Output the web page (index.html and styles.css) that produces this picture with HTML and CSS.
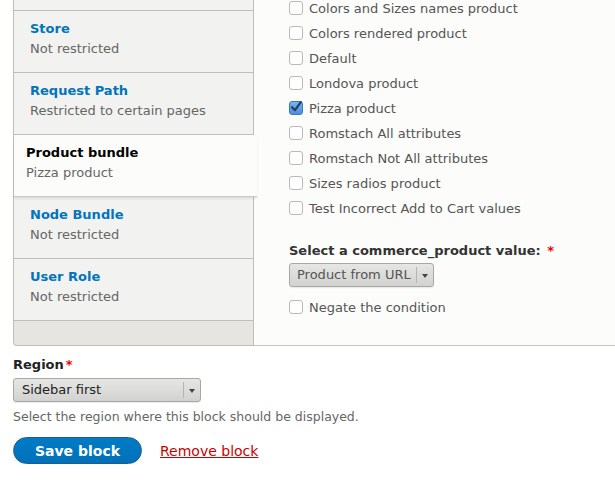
FILE: index.html
```html
<!DOCTYPE html>
<html>
<head>
<meta charset="utf-8">
<link rel="stylesheet" href="styles.css">
</head>
<body>
<div class="page">
  <div class="vtabs">
    <ul class="menu">
      <li class="item stub"></li>
      <li class="item"><a href="#"><strong>Store</strong><span class="summary">Not restricted</span></a></li>
      <li class="item"><a href="#"><strong>Request Path</strong><span class="summary">Restricted to certain pages</span></a></li>
      <li class="item selected"><a href="#"><strong>Product bundle</strong><span class="summary">Pizza product</span></a></li>
      <li class="item"><a href="#"><strong>Node Bundle</strong><span class="summary">Not restricted</span></a></li>
      <li class="item"><a href="#"><strong>User Role</strong><span class="summary">Not restricted</span></a></li>
    </ul>
    <div class="pane">
      <div class="checks">
        <label class="check"><span class="cb"></span>Colors and Sizes names product</label>
        <label class="check"><span class="cb"></span>Colors rendered product</label>
        <label class="check"><span class="cb"></span>Default</label>
        <label class="check"><span class="cb"></span>Londova product</label>
        <label class="check"><span class="cb checked"><svg viewBox="0 0 14 14" width="14" height="14"><path d="M3 7.2 L6 10.2 L11.8 2.2" fill="none" stroke="#1f3f66" stroke-width="2.2" stroke-linecap="round" stroke-linejoin="round"/></svg></span>Pizza product</label>
        <label class="check"><span class="cb"></span>Romstach All attributes</label>
        <label class="check"><span class="cb"></span>Romstach Not All attributes</label>
        <label class="check"><span class="cb"></span>Sizes radios product</label>
        <label class="check"><span class="cb"></span>Test Incorrect Add to Cart values</label>
      </div>
      <div class="field product-field">
        <div class="label">Select a commerce_product value: <span class="req">*</span></div>
        <div class="select product-select"><span class="sel-text">Product from URL</span><span class="sel-arrow"></span></div>
        <label class="check negate"><span class="cb"></span>Negate the condition</label>
      </div>
    </div>
  </div>

  <div class="field region">
    <div class="label">Region<span class="req">*</span></div>
    <div class="select region-select"><span class="sel-text">Sidebar first</span><span class="sel-arrow"></span></div>
    <div class="description">Select the region where this block should be displayed.</div>
  </div>

  <div class="actions">
    <button class="button-primary">Save block</button>
    <a href="#" class="remove">Remove block</a>
  </div>
</div>
</body>
</html>
```

FILE: styles.css
```css
* { box-sizing: border-box; }
body {
  margin: 0;
  background: #fff;
  font-family: "DejaVu Sans", sans-serif;
  font-size: 13px;
  color: #222;
}
.page {
  padding-left: 13px;
}
.vtabs {
  display: flex;
  align-items: stretch;
}
.menu {
  list-style: none;
  margin: 0;
  padding: 0;
  width: 241px;
  flex: none;
  background: #e6e5e1;
  border: 1px solid #bfbfba;
  border-top: none;
  border-radius: 0 0 0 4px;
}
.item {
  background: #f2f2f0;
  border-bottom: 1px solid #bfbfba;
  height: 62px;
}
.item.stub {
  height: 11px;
}
.item a {
  display: flex;
  flex-direction: column;
  padding: 8px 15px 0 16px;
  text-decoration: none;
  line-height: 20px;
}
.item strong {
  color: #0074bd;
  font-weight: bold;
}
.summary {
  color: #666;
}
.item.selected {
  position: relative;
  z-index: 1;
  background: #fcfcfa;
  margin-right: -4px;
  border-bottom-color: #c8c8c4;
  box-shadow: 0 2px 2px rgba(0,0,0,0.08);
}
.item.selected a {
  padding-left: 12px;
}
.item.selected strong {
  color: #000;
}
.pane {
  flex: 1;
  background: #fcfcfa;
  border-bottom: 1px solid #c4c4c0;
  padding-left: 35px;
  color: #555;
}
.checks {
  margin-top: -4px;
}
.check {
  display: flex;
  align-items: center;
  height: 25px;
  color: #555;
}
.cb {
  width: 14px;
  height: 14px;
  border: 1px solid #b9b9b6;
  border-radius: 3px;
  background: #fff;
  margin-right: 6px;
  flex: none;
  position: relative;
  top: -1px;
}
.cb.checked {
  background: linear-gradient(#7ab3e8, #4a8fd6);
  border-color: #3a78bd;
}
.cb.checked svg {
  position: absolute;
  left: -1px;
  top: -2px;
}
.product-field {
  margin-top: 21px;
}
.label {
  font-weight: bold;
  color: #333;
  line-height: 18px;
}
.req {
  color: #e00;
  margin-left: 2px;
}
.select {
  display: flex;
  align-items: stretch;
  height: 24px;
  border: 1px solid #a8a8a4;
  border-radius: 3px;
  background: linear-gradient(#e6e6e4, #d2d2d0);
  color: #333;
  margin-top: 4px;
  box-shadow: 0 1px 1px rgba(0,0,0,0.08);
}
.product-select {
  width: 145px;
  margin-top: 3px;
}
.sel-text {
  flex: 1;
  padding-left: 7px;
  line-height: 22px;
  white-space: nowrap;
}
.sel-arrow {
  width: 17px;
  border-left: 1px solid #b5b5b3;
  margin: 3px 0;
  position: relative;
}
.sel-arrow::after {
  content: "";
  position: absolute;
  left: 5px;
  top: 7px;
  border-left: 3px solid transparent;
  border-right: 3px solid transparent;
  border-top: 4px solid #444;
}
.product-select .sel-text {
  color: #555;
}
.negate {
  margin-top: 8px;
  margin-bottom: 25px;
}
.region {
  margin-top: 10px;
}
.region .label {
  color: #222;
}
.region-select {
  width: 188px;
}
.region-select .sel-text {
  padding-left: 8px;
  color: #222;
}
.description {
  color: #666;
  margin-top: 7px;
  line-height: 16px;
  font-size: 12.5px;
}
.actions {
  display: flex;
  align-items: center;
  margin-top: 12px;
}
.button-primary {
  width: 129px;
  height: 27px;
  border: 1px solid #1e5c90;
  border-radius: 20px;
  background: linear-gradient(#007bc6, #0071b8);
  color: #fff;
  font-family: "DejaVu Sans", sans-serif;
  font-weight: bold;
  font-size: 14px;
  padding: 0;
}
.remove {
  margin-left: 18px;
  color: #c00;
  font-size: 14px;
}
```
